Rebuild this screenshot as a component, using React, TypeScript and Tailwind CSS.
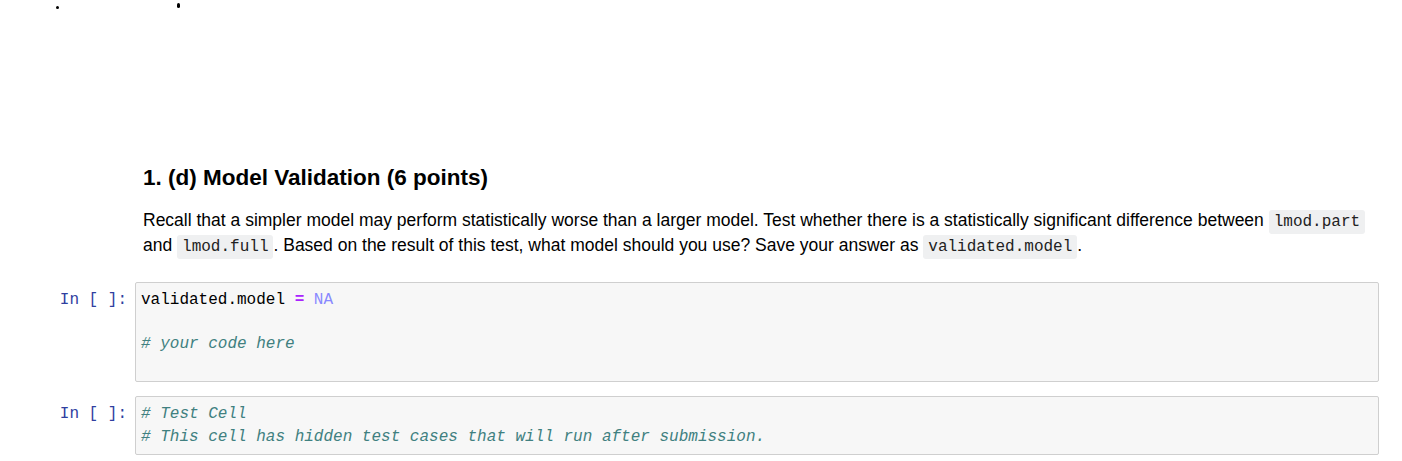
const mono = "font-['Liberation_Mono','DejaVu_Sans_Mono',monospace]";

function InlineCode({ children }: { children: string }) {
  return (
    <code className={`${mono} text-[16px] leading-none bg-[#eff0f1] text-[#222] rounded-[3px] px-[5px] py-[3px]`}>
      {children}
    </code>
  );
}

function Prompt() {
  return (
    <div className={`${mono} w-[128px] shrink-0 text-right pr-[1px] text-[16px] leading-[22px] pt-[7px] text-[#303f9f]`}>
      In [ ]:
    </div>
  );
}

function CodeCell({ children, pad }: { children: React.ReactNode; pad: string }) {
  return (
    <div className="flex items-start">
      <Prompt />
      <div
        className={`${mono} ${pad} ml-[7px] w-[1244px] bg-[#f7f7f7] border border-[#cfcfcf] rounded-[2px] px-[5px] text-[16px] text-black whitespace-pre`}
      >
        {children}
      </div>
    </div>
  );
}

export default function App() {
  return (
    <div className="w-[1402px] h-[461px] bg-white overflow-hidden font-['Liberation_Sans',Arial,sans-serif] text-black">
      {/* stray marks at the top edge */}
      <div className="flex items-start h-[12px]">
        <div className="ml-[56px] mt-[6px] w-[3px] h-[3px] rounded-full bg-black" />
        <div className="ml-[118px] mt-[3px] w-[3px] h-[5px] rounded-full bg-black" />
      </div>

      {/* markdown cell */}
      <div className="pl-[143px] pt-[153px]">
        <h2 className="text-[22.5px] leading-[26px] font-bold">1. (d) Model Validation (6 points)</h2>
        <p className="mt-[17px] text-[17.5px] leading-[25px] w-[1240px]">
          Recall that a simpler model may perform statistically worse than a larger model. Test whether there is a
          statistically significant difference between <InlineCode>lmod.part</InlineCode>{' '}
          and <InlineCode>lmod.full</InlineCode>. Based on the result of this test, what model should you use? Save your
          answer as <InlineCode>validated.model</InlineCode>.
        </p>
      </div>

      <div className="mt-[24px]">
        <CodeCell pad="pt-[6px] pb-[4px] leading-[22px]">
          {'validated.model '}
          <span className="text-[#aa22ff] font-bold">=</span>
          {' '}
          <span className="text-[#8888ff]">NA</span>
          {'\n\n'}
          <span className="italic text-[#408080]"># your code here</span>
          {'\n '}
        </CodeCell>
      </div>

      <div className="mt-[14px]">
        <CodeCell pad="pt-[6px] pb-[5px] leading-[23px]">
          <span className="italic text-[#408080]">
            {'# Test Cell\n# This cell has hidden test cases that will run after submission.'}
          </span>
        </CodeCell>
      </div>
    </div>
  );
}
